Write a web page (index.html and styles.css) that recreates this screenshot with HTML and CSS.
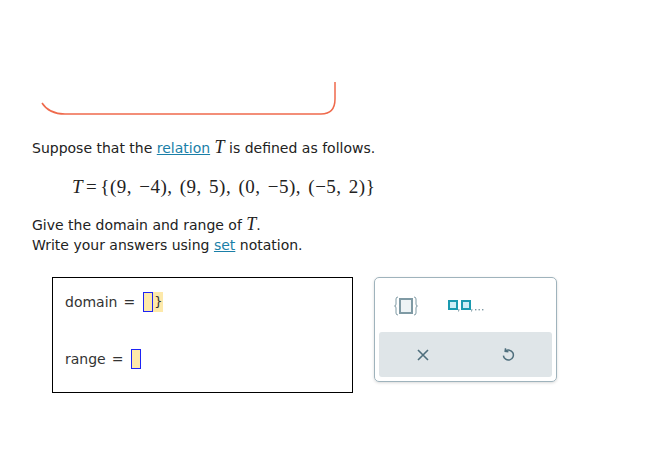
FILE: index.html
```html
<!DOCTYPE html>
<html>
<head>
<meta charset="utf-8">
<link rel="stylesheet" href="styles.css">
</head>
<body>
<div class="page">
  <svg class="frame" width="296" height="36" viewBox="0 0 296 36">
    <path d="M1 22 Q8 33 24 33 L280 33 Q294 33 294 18 L294 1" fill="none" stroke="#ef6a4c" stroke-width="1.5"/>
  </svg>
  <p class="text first">Suppose that the <a class="link">relation</a> <span class="mi">T</span> is defined as follows.</p>
  <p class="math"><span class="mi">T</span><span class="op">=</span>{(9, −4), (9, 5), (0, −5), (−5, 2)}</p>
  <p class="text q1">Give the domain and range of <span class="mi">T</span>.</p>
  <p class="text">Write your answers using <a class="link">set</a> notation.</p>
  <div class="work">
    <div class="answer">
      <div class="row dom">domain <span class="eq">=</span> <span class="slot"></span><span class="brace">}</span></div>
      <div class="row rng">range <span class="eq">=</span> <span class="slot"></span></div>
    </div>
    <div class="palette">
      <div class="tools">
        <span class="tool t1">
          <svg width="26" height="22" viewBox="0 0 26 22">
            <path d="M5 2 Q3 2 3 4 L3 9 Q3 11 1.5 11 Q3 11 3 13 L3 18 Q3 20 5 20" fill="none" stroke="#7f9aa4" stroke-width="1"/>
            <path d="M21 2 Q23 2 23 4 L23 9 Q23 11 24.5 11 Q23 11 23 13 L23 18 Q23 20 21 20" fill="none" stroke="#7f9aa4" stroke-width="1"/>
            <rect x="7" y="4" width="12" height="14" fill="#eef3f5" stroke="#7f9aa4" stroke-width="2"/>
          </svg>
        </span>
        <span class="tool t2">
          <svg width="38" height="14" viewBox="0 0 38 14">
            <rect x="1" y="2" width="8" height="8" fill="#cdeef6" stroke="#1a9ab0" stroke-width="2"/>
            <rect x="14" y="2" width="8" height="8" fill="#cdeef6" stroke="#1a9ab0" stroke-width="2"/>
            <path d="M11 10 L10.5 12.5" stroke="#7f9aa4" stroke-width="1"/>
            <path d="M24 10 L23.5 12.5" stroke="#7f9aa4" stroke-width="1"/>
            <rect x="27" y="10" width="1.4" height="1.4" fill="#7f9aa4"/>
            <rect x="30.5" y="10" width="1.4" height="1.4" fill="#7f9aa4"/>
            <rect x="34" y="10" width="1.4" height="1.4" fill="#7f9aa4"/>
          </svg>
        </span>
      </div>
      <div class="actions">
        <span class="act">
          <svg width="14" height="14" viewBox="0 0 14 14">
            <path d="M2 2 L12 12 M12 2 L2 12" stroke="#4e6e7c" stroke-width="1.6" fill="none"/>
          </svg>
        </span>
        <span class="act">
          <svg width="16" height="16" viewBox="0 0 16 16">
            <path d="M5.2 4.2 A5 5 0 1 1 3.4 8.6" fill="none" stroke="#4e6e7c" stroke-width="1.5"/>
            <path d="M5.5 1.2 L5.2 4.4 L8.4 4.8" fill="none" stroke="#4e6e7c" stroke-width="1.5"/>
          </svg>
        </span>
      </div>
    </div>
  </div>
</div>
</body>
</html>
```
FILE: styles.css
```css
html, body { margin: 0; padding: 0; background: #fff; }
body { font-family: "DejaVu Sans", Verdana, sans-serif; font-size: 14px; color: #222; }
.page { padding: 81px 0 0 32px; }
.frame { display: block; margin-left: 9px; overflow: visible; }
.text { margin: 0; line-height: 20px; }
.first { margin-top: 20px; }
.q1 { margin-top: 15px; }
.link { color: #1a7fa8; text-decoration: underline; }
.mi { font-family: "Liberation Serif", "Times New Roman", serif; font-style: italic; font-size: 18px; }
.math { margin: 17px 0 0 40px; font-family: "Liberation Serif", "Times New Roman", serif; font-size: 19px; line-height: 24px; word-spacing: 2px; letter-spacing: 0.5px; }
.math .mi { font-size: 19px; }
.op { margin: 0 3px 0 3px; }
.work { display: flex; align-items: flex-start; gap: 21px; margin: 22px 0 0 20px; }
.answer { width: 301px; height: 116px; border: 1px solid #000; padding: 0 0 0 12px; box-sizing: border-box; display: flex; flex-direction: column; }
.row { display: flex; align-items: center; height: 20px; color: #333; }
.dom { margin-top: 14px; }
.rng { margin-top: 37px; }
.eq { margin: 0 6px 0 6px; }
.slot { display: inline-block; width: 8px; height: 18px; border: 1px solid #1d23f5; background: #fde9aa; margin-left: 2px; }
.brace { background: #fde9aa; color: #333; height: 20px; line-height: 20px; font-size: 13px; padding: 0 1px; }
.palette { width: 183px; height: 105px; box-sizing: border-box; border: 1px solid #9fb3bc; border-radius: 5px; box-shadow: 0 1px 3px rgba(0,0,0,0.15); padding: 0 4px 4px 4px; display: flex; flex-direction: column; }
.tools { display: flex; align-items: center; height: 54px; flex: none; }
.tool { display: flex; align-items: center; justify-content: center; }
.t1 { margin-left: 14px; margin-top: 1px; }
.t2 { margin-left: 29px; margin-top: 2px; }
.actions { flex: 1; background: #dfe5e8; border-radius: 3px; display: flex; align-items: center; justify-content: space-around; padding: 0 2px; }
.act { display: flex; width: 40px; justify-content: center; }
```
